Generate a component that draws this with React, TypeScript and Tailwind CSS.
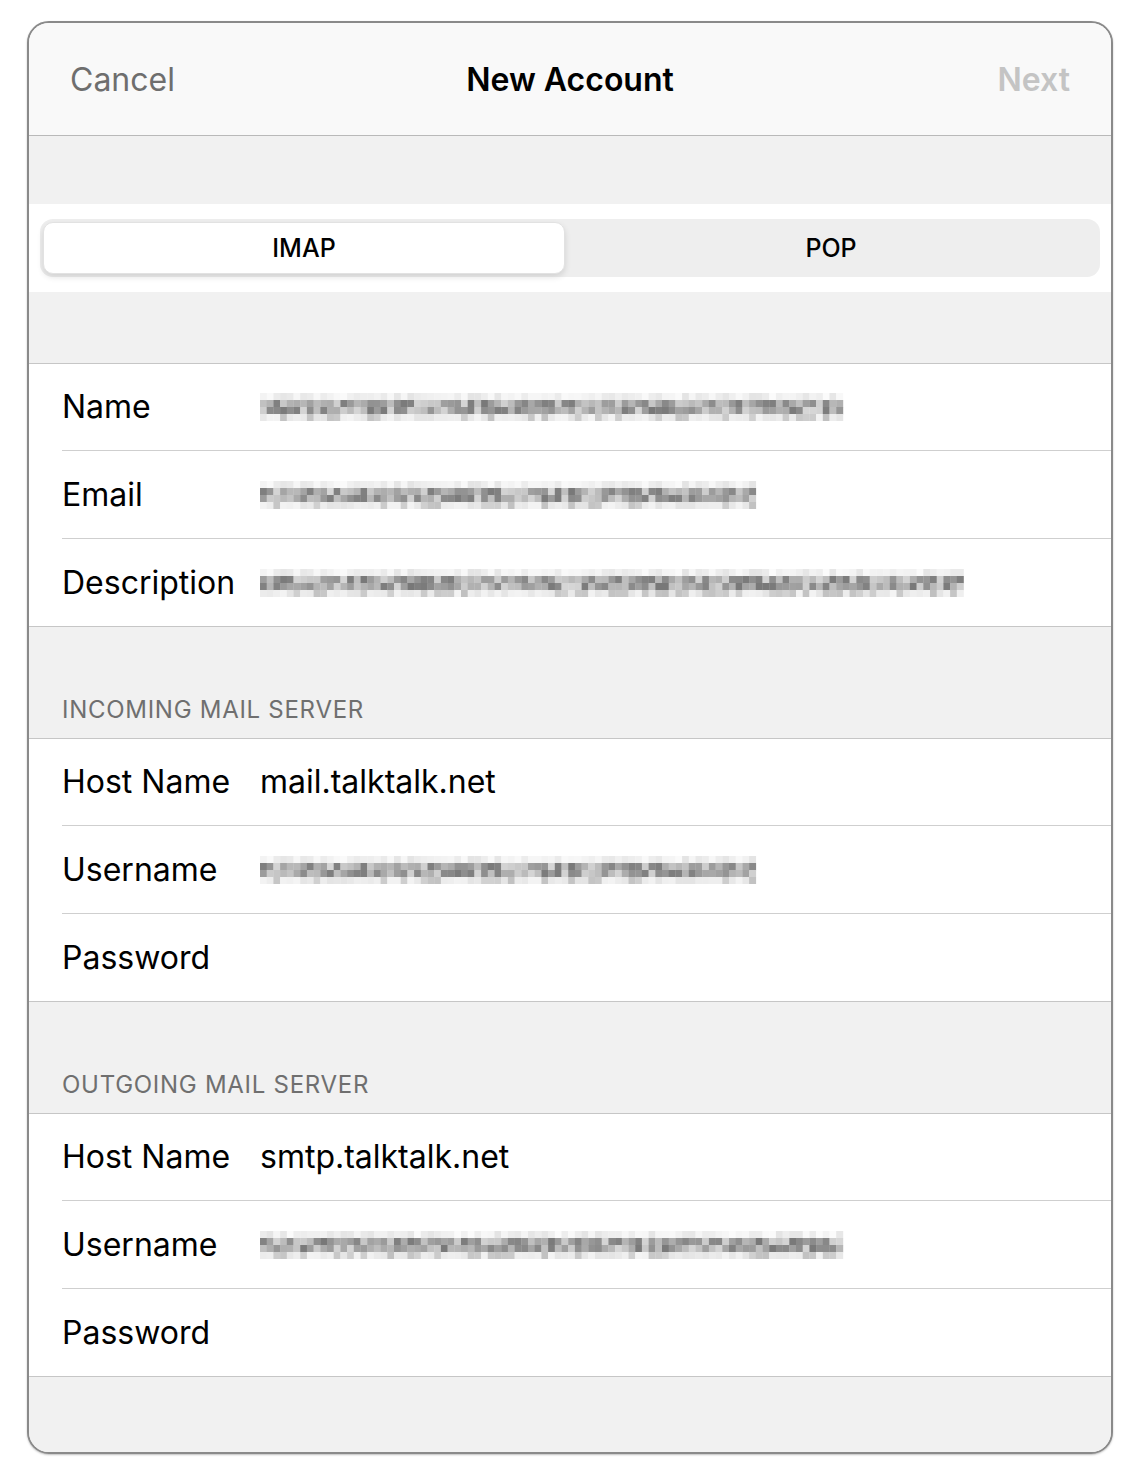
import React from "react";

type Field = {
  label: string;
  value?: string;
  blur?: number;
  seed?: number;
};

// pixelated, blurred-out text (the screenshot hides personal data)
function Blur({ width, seed }: { width: number; seed: number }) {
  const cell = 6.7;
  const cols = Math.floor(width / cell);
  let s = seed;
  const rnd = () => {
    s = (s * 9301 + 49297) % 233280;
    return s / 233280;
  };
  const rects: React.ReactNode[] = [];
  for (let r = 0; r < 4; r++) {
    for (let c = 0; c < cols; c++) {
      const v = rnd();
      let shade: number;
      if (r === 0) shade = 228 + Math.floor(v * 24);
      else if (r === 3) shade = v > 0.7 ? 150 + Math.floor(v * 60) : 228 + Math.floor(v * 24);
      else shade = 120 + Math.floor(v * 95);
      rects.push(
        <rect
          key={`${r}-${c}`}
          x={c * cell}
          y={r * 7}
          width={cell + 0.3}
          height={7.3}
          fill={`rgb(${shade},${shade},${shade})`}
        />
      );
    }
  }
  return (
    <svg width={width} height={28} className="block">
      {rects}
    </svg>
  );
}

const rowHeights = ["h-[87px]", "h-[88px]", "h-[87px]"];

function Group({ fields }: { fields: Field[] }) {
  return (
    <div className="border-y border-[#c6c6c6] bg-white pl-[33px]">
      {fields.map((f, i) => (
        <div
          key={f.label + i}
          className={`flex ${rowHeights[i]} items-center ${
            i < fields.length - 1 ? "border-b border-[#cfcfcf]" : ""
          }`}
        >
          <span className="w-[198px] shrink-0 text-[32px] text-black">{f.label}</span>
          {f.value && <span className="text-[32px] text-black">{f.value}</span>}
          {f.blur && <Blur width={f.blur} seed={f.seed ?? 7} />}
        </div>
      ))}
    </div>
  );
}

function SectionHeader({ title }: { title: string }) {
  return (
    <div className="flex h-[111px] items-end bg-[#f1f1f1] px-[33px] pb-[10px]">
      <span className="text-[24px] tracking-[0.03em] text-[#6f6f6f]">{title}</span>
    </div>
  );
}

export default function App() {
  return (
    <div className="min-h-[1480px] bg-white pl-[27px] pt-[21px] font-[Inter,'Noto_Sans',sans-serif]">
      <div className="flex h-[1433px] w-[1086px] flex-col overflow-hidden rounded-[22px] border-2 border-[#8a8a8a] bg-[#f1f1f1] shadow-[0_1px_2px_rgba(0,0,0,0.25)]">
        {/* nav bar */}
        <div className="grid h-[113px] shrink-0 grid-cols-3 items-center border-b border-[#b9b9b9] bg-[#f9f9f9] px-[41px] pt-[2px]">
          <span className="text-[32px] text-[#6e6e6e]">Cancel</span>
          <span className="text-center text-[32px] font-semibold text-black">New Account</span>
          <span className="text-right text-[32px] font-semibold text-[#c4c4c4]">Next</span>
        </div>

        <div className="h-[68px] shrink-0" />

        {/* IMAP / POP */}
        <div className="flex h-[88px] shrink-0 items-center bg-white px-[11px]">
          <div className="flex h-[58px] w-full rounded-[13px] bg-[#eeeeee] p-[3px]">
            <div className="flex w-[522px] items-center justify-center rounded-[10px] border border-[#e2e2e2] bg-white pt-[2px] text-[25px] font-medium text-black shadow-[0_3px_6px_rgba(0,0,0,0.12)]">
              IMAP
            </div>
            <div className="flex flex-1 items-center justify-center pt-[2px] text-[25px] font-medium text-black">
              POP
            </div>
          </div>
        </div>

        <div className="h-[71px] shrink-0" />

        <Group
          fields={[
            { label: "Name", blur: 586, seed: 11 },
            { label: "Email", blur: 497, seed: 11 },
            { label: "Description", blur: 705, seed: 11 },
          ]}
        />

        <SectionHeader title="INCOMING MAIL SERVER" />
        <Group
          fields={[
            { label: "Host Name", value: "mail.talktalk.net" },
            { label: "Username", blur: 497, seed: 11 },
            { label: "Password" },
          ]}
        />

        <SectionHeader title="OUTGOING MAIL SERVER" />
        <Group
          fields={[
            { label: "Host Name", value: "smtp.talktalk.net" },
            { label: "Username", blur: 586, seed: 53 },
            { label: "Password" },
          ]}
        />

        <div className="flex-1 bg-[#f1f1f1]" />
      </div>
    </div>
  );
}
